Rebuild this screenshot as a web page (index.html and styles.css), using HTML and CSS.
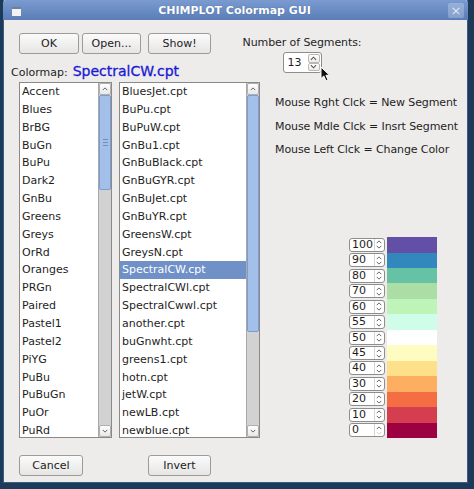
FILE: index.html
```html
<!DOCTYPE html>
<html lang="en">
<head>
    <meta charset="UTF-8">
    <meta name="viewport" content="width=device-width, initial-scale=1.0">
    <title>CHIMPLOT Colormap GUI</title>
    <link rel="stylesheet" href="styles.css">
</head>
<body>
    <div class="window">
        <div class="titlebar">
            <span class="win-icon"></span>
            <span class="title">CHIMPLOT Colormap GUI</span>
            <span class="close">&times;</span>
        </div>
        <div class="content">
            <div class="top">
                <div class="top-left">
                    <div class="buttons">
                        <button class="btn btn-ok">OK</button>
                        <button class="btn btn-open">Open...</button>
                        <button class="btn btn-show">Show!</button>
                    </div>
                    <div class="colormap">
                        <span class="cm-label">Colormap:</span>
                        <span class="cm-name">SpectralCW.cpt</span>
                    </div>
                </div>
                <div class="top-right">
                    <div class="seg-label">Number of Segments:</div>
                    <div class="spinner big">
                        <span class="val">13</span>
                        <span class="arrows">
                            <span class="arr"><svg viewBox="0 0 8 5"><path d="M1 4 L4 1 L7 4" /></svg></span>
                            <span class="arr"><svg viewBox="0 0 8 5"><path d="M1 1 L4 4 L7 1" /></svg></span>
                        </span>
                    </div>
                </div>
            </div>

            <div class="main">
                <div class="list list-maps">
                    <div class="items" id="maps"></div>
                    <div class="scrollbar">
                        <div class="sb-btn"><svg viewBox="0 0 8 5"><path d="M1 4 L4 1 L7 4" /></svg></div>
                        <div class="sb-thumb thumb-maps"><span class="grip"></span></div>
                        <div class="sb-track"></div>
                        <div class="sb-btn"><svg viewBox="0 0 8 5"><path d="M1 1 L4 4 L7 1" /></svg></div>
                    </div>
                </div>
                <div class="list list-files">
                    <div class="items" id="files"></div>
                    <div class="scrollbar">
                        <div class="sb-btn"><svg viewBox="0 0 8 5"><path d="M1 4 L4 1 L7 4" /></svg></div>
                        <div class="sb-thumb thumb-files"><span class="grip"></span></div>
                        <div class="sb-track"></div>
                        <div class="sb-btn"><svg viewBox="0 0 8 5"><path d="M1 1 L4 4 L7 1" /></svg></div>
                    </div>
                </div>
                <div class="side">
                    <div class="help">
                        <div>Mouse Rght Clck = New Segment</div>
                        <div>Mouse Mdle Clck = Insrt Segment</div>
                        <div>Mouse Left Clck = Change Color</div>
                    </div>
                    <div class="segments" id="segments"></div>
                </div>
            </div>

            <div class="bottom">
                <button class="btn btn-cancel">Cancel</button>
                <button class="btn btn-invert">Invert</button>
            </div>
        </div>
        <svg class="cursor" viewBox="0 0 11 16">
            <path d="M1 1 L1 12.5 L3.8 10 L6 14.8 L8 13.9 L5.9 9.3 L9.6 9.3 Z" />
        </svg>
    </div>

    <script>
        let maps = ['Accent', 'Blues', 'BrBG', 'BuGn', 'BuPu', 'Dark2', 'GnBu', 'Greens', 'Greys', 'OrRd',
            'Oranges', 'PRGn', 'Paired', 'Pastel1', 'Pastel2', 'PiYG', 'PuBu', 'PuBuGn', 'PuOr', 'PuRd'];
        let files = ['BluesJet.cpt', 'BuPu.cpt', 'BuPuW.cpt', 'GnBu1.cpt', 'GnBuBlack.cpt', 'GnBuGYR.cpt',
            'GnBuJet.cpt', 'GnBuYR.cpt', 'GreensW.cpt', 'GreysN.cpt', 'SpectralCW.cpt', 'SpectralCWl.cpt',
            'SpectralCwwl.cpt', 'another.cpt', 'buGnwht.cpt', 'greens1.cpt', 'hotn.cpt', 'jetW.cpt',
            'newLB.cpt', 'newblue.cpt'];
        let segments = [
            { value: 100, color: '#6350a6' },
            { value: 90, color: '#3288bd' },
            { value: 80, color: '#66c2a5' },
            { value: 70, color: '#abdda4' },
            { value: 60, color: '#bff4b8' },
            { value: 55, color: '#cffdea' },
            { value: 50, color: '#ffffff' },
            { value: 45, color: '#fffcc2' },
            { value: 40, color: '#fee08b' },
            { value: 30, color: '#fdae61' },
            { value: 20, color: '#f46d43' },
            { value: 10, color: '#d53e4f' },
            { value: 0, color: '#9e0142' }
        ];

        function fillList(id, names, selected) {
            let box = document.getElementById(id);
            names.forEach(name => {
                let row = document.createElement('div');
                row.classList.add('row');
                if (name === selected) {
                    row.classList.add('selected');
                }
                row.textContent = name;
                box.appendChild(row);
            });
        }

        function fillSegments() {
            let box = document.getElementById('segments');
            segments.forEach((seg, i) => {
                let spin = document.createElement('div');
                spin.classList.add('spinner', 'small');
                let last = i === segments.length - 1;
                spin.innerHTML = `
                    <span class="val">${seg.value}</span>
                    <span class="arrows">
                        <svg viewBox="0 0 8 5"><path d="M1 4 L4 1 L7 4" /></svg>
                        <svg viewBox="0 0 8 5" class="${last ? 'off' : ''}"><path d="M1 1 L4 4 L7 1" /></svg>
                    </span>`;
                let swatch = document.createElement('div');
                swatch.classList.add('swatch');
                swatch.style.background = seg.color;
                box.appendChild(spin);
                box.appendChild(swatch);
            });
        }

        fillList('maps', maps, '');
        fillList('files', files, 'SpectralCW.cpt');
        fillSegments();
    </script>
</body>
</html>
```

FILE: styles.css
```css
body {
    margin: 0;
    background-color: #1d3a58;
    font-family: "DejaVu Sans", Verdana, sans-serif;
    font-size: 11px;
    color: #1e1e1e;
}
.window {
    position: relative;
    width: 465px;
    height: 483px;
    margin-left: 3px;
    box-sizing: border-box;
    background-color: #edeceb;
    border: 1px solid #3d5c85;
    border-top: none;
}

/* title bar */
.titlebar {
    height: 20px;
    margin: 0 -1px;
    display: flex;
    align-items: center;
    background: linear-gradient(#7b9bd0, #5a7db8);
    border-radius: 3px 3px 0 0;
    color: #fff;
}
.win-icon {
    width: 9px;
    height: 7px;
    margin-left: 9px;
    margin-top: 2px;
    background-color: #f2f2f2;
    border-top: 2px solid #6c7fa0;
}
.title {
    flex: 1;
    text-align: center;
    font-weight: bold;
    font-size: 11px;
    text-shadow: 0 0 1px #3c5a8c;
}
.close {
    width: 16px;
    height: 15px;
    margin-right: 4px;
    background-color: rgba(255, 255, 255, 0.25);
    border-radius: 2px;
    color: #dce6f4;
    font-size: 13px;
    line-height: 15px;
    text-align: center;
}

.content {
    padding-left: 7px;
}

/* buttons */
.btn {
    height: 21px;
    padding: 0;
    box-sizing: border-box;
    font-family: inherit;
    font-size: 11px;
    color: #222;
    background: linear-gradient(#fbfbfb, #e6e5e4);
    border: 1px solid #9c9b99;
    border-radius: 3px;
}

/* top part */
.top {
    display: flex;
    height: 47px;
    margin-top: 13px;
}
.top-left {
    width: 232px;
}
.buttons {
    display: flex;
    margin-left: 8px;
}
.btn-ok {
    width: 60px;
}
.btn-open {
    width: 59px;
    margin-left: 3px;
}
.btn-show {
    width: 63px;
    margin-left: 7px;
}
.colormap {
    display: flex;
    align-items: baseline;
    height: 18px;
    line-height: 18px;
    margin-top: 8px;
}
.cm-name {
    margin-left: 5px;
    font-size: 14px;
    color: #1a1ad6;
    -webkit-text-stroke: 0.3px #1a1ad6;
}
.top-right {
    width: 118px;
    padding-top: 3px;
    display: flex;
    flex-direction: column;
    align-items: center;
    white-space: nowrap;
}
.seg-label {
    line-height: 13px;
    letter-spacing: -0.1px;
}

/* spinners */
.spinner {
    display: flex;
    box-sizing: border-box;
    background-color: #fff;
    border: 1px solid #8e8d8b;
    border-radius: 3px;
}
.spinner .val {
    flex: 1;
}
.spinner svg {
    display: block;
}
.spinner path,
.sb-btn path {
    fill: none;
    stroke: #555;
    stroke-width: 1.2;
}
.spinner.big {
    width: 39px;
    height: 21px;
    margin-top: 3px;
}
.spinner.big .val {
    padding-left: 4px;
    line-height: 19px;
}
.spinner.big .arrows {
    width: 12px;
    display: flex;
    flex-direction: column;
    margin: 1px 1px 1px 0;
}
.spinner.big .arr {
    flex: 1;
    display: flex;
    align-items: center;
    justify-content: center;
    border: 1px solid #b9b8b6;
    border-radius: 2px;
    background: linear-gradient(#fff, #ebebeb);
}
.spinner.big .arr svg {
    width: 7px;
    height: 5px;
}
.spinner.small {
    height: 14px;
    align-self: center;
}
.spinner.small .val {
    padding-left: 2px;
    line-height: 12px;
}
.spinner.small .arrows {
    width: 9px;
    display: flex;
    flex-direction: column;
    justify-content: center;
    gap: 1px;
    border-left: 1px solid #d4d4d4;
}
.spinner.small .arrows svg {
    width: 6px;
    height: 4px;
    margin-left: 1px;
}
.spinner.small .arrows svg.off path {
    stroke: #c8c8c8;
}

/* lists */
.main {
    display: flex;
    height: 356px;
    margin-top: 2px;
    margin-left: 8px;
}
.list {
    display: flex;
    box-sizing: border-box;
    background-color: #fff;
    border: 1px solid #8a8988;
}
.list-maps {
    width: 93px;
}
.list-files {
    width: 141px;
    margin-left: 7px;
}
.items {
    flex: 1;
    overflow: hidden;
}
.row {
    height: 17.85px;
    line-height: 17.85px;
    padding-left: 2px;
    white-space: nowrap;
}
.row.selected {
    background-color: #7090c8;
    color: #fff;
}
.scrollbar {
    width: 12px;
    display: flex;
    flex-direction: column;
    background-color: #d2d2d2;
    border-left: 1px solid #a8a8a8;
}
.sb-btn {
    height: 12px;
    box-sizing: border-box;
    display: flex;
    align-items: center;
    justify-content: center;
    background: linear-gradient(#ffffff, #e8e8e8);
    border: 1px solid #b0b0b0;
    border-radius: 2px;
}
.sb-btn svg {
    width: 6px;
    height: 4px;
}
.sb-thumb {
    box-sizing: border-box;
    display: flex;
    align-items: center;
    justify-content: center;
    background-color: #a2c0ea;
    border: 1px solid #7c9ccb;
    border-radius: 2px;
}
.thumb-maps {
    height: 95px;
}
.thumb-files {
    height: 237px;
}
.grip {
    width: 5px;
    height: 5px;
    border-top: 1px solid #6f8fc0;
    border-bottom: 1px solid #6f8fc0;
    background: linear-gradient(transparent 40%, #6f8fc0 40%, #6f8fc0 60%, transparent 60%);
}
.thumb-files .grip {
    display: none;
}
.sb-track {
    flex: 1;
}

/* right side */
.side {
    flex: 1;
    display: flex;
    flex-direction: column;
    margin-left: 15px;
    white-space: nowrap;
}
.help {
    padding-top: 9px;
    line-height: 23.5px;
    letter-spacing: -0.1px;
}
.segments {
    margin-top: auto;
    margin-left: 74px;
    display: grid;
    grid-template-columns: 36px 50px;
    grid-auto-rows: 15.46px;
    column-gap: 2px;
}

/* bottom buttons */
.bottom {
    display: flex;
    margin-top: 17px;
    margin-left: 8px;
}
.btn-cancel {
    width: 64px;
}
.btn-invert {
    width: 63px;
    margin-left: 65px;
}

.cursor {
    position: absolute;
    left: 316px;
    top: 66px;
    width: 11px;
    height: 16px;
}
.cursor path {
    fill: #111;
    stroke: #fff;
    stroke-width: 1;
}
```
